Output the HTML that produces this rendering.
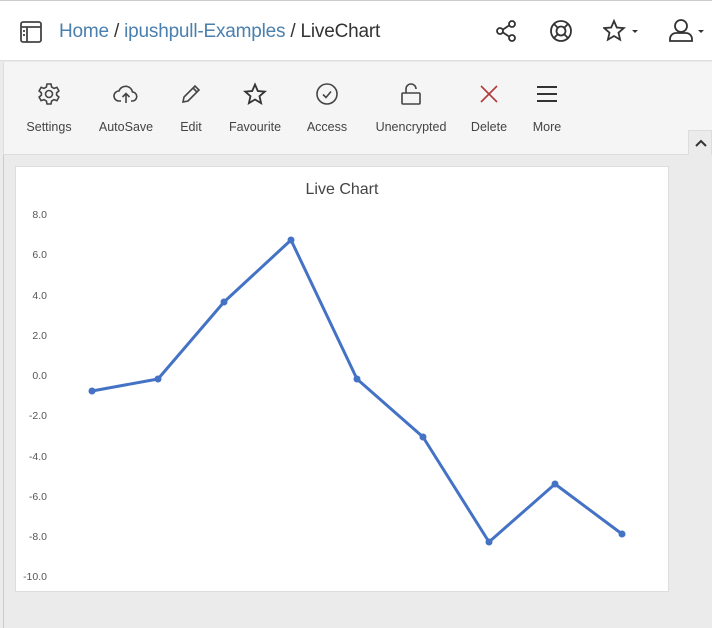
<!DOCTYPE html>
<html><head><style>
body{margin:0;width:712px;height:628px;overflow:hidden;background:#ebebeb;font-family:"Liberation Sans",sans-serif;position:relative}
.hdr{position:absolute;left:0;top:0;width:712px;height:61px;background:#fff;border-top:1px solid #ccc;border-bottom:1px solid #ddd;box-sizing:border-box}
.bc{position:absolute;left:59px;top:20px;font-size:19px;color:#333;letter-spacing:-0.2px}
.bc a{color:#4a7fae}
.tb{position:absolute;left:3px;top:62px;width:709px;height:93px;background:#f5f5f5;border-left:1px solid #ddd;border-bottom:1px solid #ddd;box-sizing:border-box}
.it{position:absolute;top:0;text-align:center;font-size:12.5px;color:#444}
.it svg{display:block;margin:20px auto 0}
.it span{display:block;margin-top:14px}
.panel{position:absolute;left:15px;top:166px;width:654px;height:426px;background:#fff;border:1px solid #ddd;box-sizing:border-box}
.tab{position:absolute;left:688px;top:130px;width:24px;height:25px;background:#ebebeb;border:1px solid #ddd;border-bottom:none;box-sizing:border-box}
.lbar{position:absolute;left:0;top:155px;width:3px;height:473px;border-right:1px solid #ccc}
</style></head><body>
<div class="hdr">
<svg style="position:absolute;left:20px;top:20px" width="22" height="22" viewBox="0 0 22 22" fill="none" stroke="#444" stroke-width="1.8"><rect x="1" y="1" width="20" height="20" rx="2"/><line x1="1" y1="6" x2="21" y2="6"/><line x1="7" y1="6" x2="7" y2="21"/><line x1="3" y1="10" x2="5" y2="10"/><line x1="3" y1="14" x2="5" y2="14"/></svg>
<div class="bc"><a>Home</a> / <a>ipushpull-Examples</a> / LiveChart</div>
<svg style="position:absolute;left:495px;top:19px" width="22" height="22" viewBox="0 0 22 22" fill="none" stroke="#333" stroke-width="1.8"><circle cx="5" cy="11" r="3"/><circle cx="17" cy="4" r="3"/><circle cx="17" cy="18" r="3"/><line x1="8" y1="9.5" x2="14" y2="5.5"/><line x1="8" y1="12.5" x2="14" y2="16.5"/></svg>
<svg style="position:absolute;left:549px;top:18px" width="24" height="24" viewBox="0 0 24 24" fill="none" stroke="#333" stroke-width="1.8"><circle cx="12" cy="12" r="10"/><circle cx="12" cy="12" r="4.5"/><line x1="5" y1="5" x2="9" y2="9"/><line x1="19" y1="5" x2="15" y2="9"/><line x1="5" y1="19" x2="9" y2="15"/><line x1="19" y1="19" x2="15" y2="15"/></svg>
<svg style="position:absolute;left:603px;top:18px" width="36" height="24" viewBox="0 0 36 24"><path d="M11 2l2.8 6.5 7 .6-5.3 4.6 1.6 6.9L11 17l-6.1 3.6 1.6-6.9L1.2 9.1l7-.6z" fill="none" stroke="#333" stroke-width="1.8"/><path d="M29 11h6l-3 3z" fill="#333"/></svg>
<svg style="position:absolute;left:668px;top:17px" width="44" height="26" viewBox="0 0 44 26"><circle cx="13" cy="8" r="6" fill="none" stroke="#333" stroke-width="1.8"/><path d="M2 23v-2a6 6 0 0 1 6-6h10a6 6 0 0 1 6 6v2z" fill="none" stroke="#333" stroke-width="1.8"/><path d="M30 12h6l-3 3z" fill="#333"/></svg>
</div>
<div class="tb">
<div class="it" style="left:18px;width:54px"><svg width="24" height="24" viewBox="0 0 24 24" fill="none" stroke="#444" stroke-width="1.6"><circle cx="12" cy="12" r="3.5"/><path d="M10 2h4l.6 3 2.4 1.4 2.9-1 2 3.5-2.3 2v2.2l2.3 2-2 3.5-2.9-1L14.6 19l-.6 3h-4l-.6-3-2.4-1.4-2.9 1-2-3.5 2.3-2v-2.2l-2.3-2 2-3.5 2.9 1L9.4 5z"/></svg><span>Settings</span></div>
<div class="it" style="left:91px;width:62px"><svg width="26" height="24" viewBox="0 0 26 24" fill="none" stroke="#444" stroke-width="1.6"><path d="M8 19H6a5 5 0 0 1 0-10 7 7 0 0 1 13.5 1A4.5 4.5 0 0 1 19 19h-1"/><path d="M13 21v-9M9.5 15l3.5-3.5 3.5 3.5"/></svg><span>AutoSave</span></div>
<div class="it" style="left:172px;width:30px"><svg width="24" height="24" viewBox="0 0 24 24" fill="none" stroke="#444" stroke-width="1.6"><path d="M4 20l1-5L16 4l4 4L9 19z M14 6l4 4"/></svg><span>Edit</span></div>
<div class="it" style="left:221px;width:60px"><svg width="24" height="24" viewBox="0 0 24 24" fill="none" stroke="#333" stroke-width="1.8"><path d="M12 2.5l2.8 6.5 7 .6-5.3 4.6 1.6 6.9L12 17.5l-6.1 3.6 1.6-6.9-5.3-4.6 7-.6z"/></svg><span>Favourite</span></div>
<div class="it" style="left:300px;width:46px"><svg width="24" height="24" viewBox="0 0 24 24" fill="none" stroke="#444" stroke-width="1.6"><circle cx="12" cy="12" r="10"/><path d="M8 12.5l3 3 5-6"/></svg><span>Access</span></div>
<div class="it" style="left:368px;width:78px"><svg width="24" height="24" viewBox="0 0 24 24" fill="none" stroke="#444" stroke-width="1.6"><rect x="3" y="11" width="18" height="11" rx="1"/><path d="M7 11V7a5 5 0 0 1 10 0"/></svg><span>Unencrypted</span></div>
<div class="it" style="left:465px;width:40px"><svg width="24" height="24" viewBox="0 0 24 24" fill="none" stroke="#b23a3a" stroke-width="1.6"><path d="M4 4l16 16M20 4L4 20"/></svg><span>Delete</span></div>
<div class="it" style="left:526px;width:34px"><svg width="24" height="24" viewBox="0 0 24 24" fill="none" stroke="#333" stroke-width="2"><path d="M2 5h20M2 12h20M2 19h20"/></svg><span>More</span></div>
</div>
<div class="tab"><svg style="position:absolute;left:5px;top:7px" width="14" height="10" viewBox="0 0 14 10" fill="none" stroke="#333" stroke-width="2"><path d="M2 8l5-5 5 5"/></svg></div>
<div class="lbar"></div>
<div class="panel">
<svg width="654" height="426" style="position:absolute;left:-1px;top:-1px" font-family="Liberation Sans,sans-serif">
<text x="327" y="28" text-anchor="middle" font-size="16" fill="#444">Live Chart</text>
<g font-size="10.5" fill="#555" text-anchor="end">
<text x="32" y="52">8.0</text><text x="32" y="92">6.0</text><text x="32" y="133">4.0</text><text x="32" y="173">2.0</text><text x="32" y="213">0.0</text><text x="32" y="253">-2.0</text><text x="32" y="294">-4.0</text><text x="32" y="334">-6.0</text><text x="32" y="374">-8.0</text><text x="32" y="414">-10.0</text>
</g>
<g transform="translate(-15,-166)">
<polyline points="92,391 158,379 224,302 291,240 357,379 423,437 489,542 555,484 622,534" fill="none" stroke="#4472c4" stroke-width="3" stroke-linejoin="round"/>
<g fill="#4472c4"><circle cx="92" cy="391" r="3.5"/><circle cx="158" cy="379" r="3.5"/><circle cx="224" cy="302" r="3.5"/><circle cx="291" cy="240" r="3.5"/><circle cx="357" cy="379" r="3.5"/><circle cx="423" cy="437" r="3.5"/><circle cx="489" cy="542" r="3.5"/><circle cx="555" cy="484" r="3.5"/><circle cx="622" cy="534" r="3.5"/></g>
</g>
</svg>
</div>
</body></html>
